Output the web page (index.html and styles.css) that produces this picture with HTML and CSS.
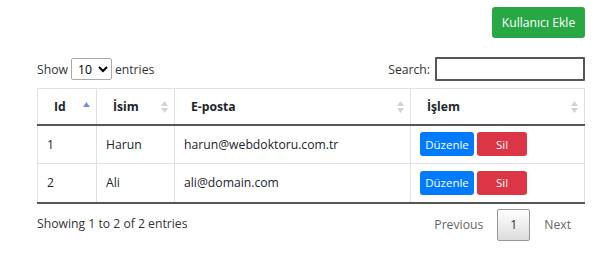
FILE: index.html
```html
<!DOCTYPE html>
<html lang="tr">
<head>
  <meta charset="UTF-8">
  <meta name="viewport" content="width=device-width, initial-scale=1.0">
  <title>Kullanıcılar</title>
  <link rel="stylesheet" href="styles.css">
</head>
<body>
  <div class="page">
    <div class="toolbar">
      <button class="btn btn--green">Kullanıcı Ekle</button>
    </div>
    <div class="controls">
      <label class="length">Show
        <select class="length__select">
          <option>10</option>
        </select>
        entries</label>
      <label class="search">Search: <input class="search__input" type="search"></label>
    </div>
    <table class="users">
      <colgroup>
        <col style="width: 59px">
        <col style="width: 78px">
        <col style="width: 236px">
        <col>
      </colgroup>
      <thead>
        <tr>
          <th class="sort sort--asc">Id</th>
          <th class="sort">İsim</th>
          <th class="sort">E-posta</th>
          <th class="sort">İşlem</th>
        </tr>
      </thead>
      <tbody>
        <tr>
          <td>1</td>
          <td>Harun</td>
          <td>harun@webdoktoru.com.tr</td>
          <td><button class="btn btn--blue">Düzenle</button><button class="btn btn--red">Sil</button></td>
        </tr>
        <tr>
          <td>2</td>
          <td>Ali</td>
          <td>ali@domain.com</td>
          <td><button class="btn btn--blue">Düzenle</button><button class="btn btn--red">Sil</button></td>
        </tr>
      </tbody>
    </table>
    <div class="footer">
      <div class="info">Showing 1 to 2 of 2 entries</div>
      <div class="paging">
        <span class="paging__link">Previous</span>
        <span class="paging__link paging__link--current">1</span>
        <span class="paging__link">Next</span>
      </div>
    </div>
  </div>
</body>
</html>
```

FILE: styles.css
```css
* {
  box-sizing: border-box;
}

body {
  margin: 0;
  font-family: "Open Sans", "Noto Sans", sans-serif;
  font-size: 12.2px;
  color: #212529;
  background-color: #fff;
}

.page {
  width: 585px;
  padding-left: 37px;
}

.toolbar {
  display: flex;
  justify-content: flex-end;
  padding-top: 7px;
}

.btn {
  border: 0;
  border-radius: 3px;
  color: #fff;
  font-family: inherit;
  cursor: pointer;
  padding: 0;
}

.btn--green {
  width: 93px;
  height: 31px;
  font-size: 12.2px;
  background-color: #28a745;
}

.controls {
  display: flex;
  justify-content: space-between;
  align-items: center;
  margin-top: 19px;
  height: 24px;
}

.length {
  display: flex;
  align-items: center;
  gap: 3px;
  color: #333;
}

.length__select {
  width: 41px;
  height: 22px;
  font-family: inherit;
  font-size: 12.2px;
  padding: 0 2px;
  border: 1px solid #aaa;
  border-radius: 2px;
  background-color: #fff;
}

.search {
  display: flex;
  align-items: center;
  gap: 5px;
  color: #333;
}

.search__input {
  width: 150px;
  height: 24px;
  border: 2px solid #555;
  border-radius: 1px;
}

.users {
  width: 548px;
  margin-top: 7px;
  border-collapse: collapse;
  table-layout: fixed;
  border-bottom: 2px solid #555;
}

.users th,
.users td {
  border: 1px solid #dee2e6;
  text-align: left;
}

.users th {
  position: relative;
  height: 36px;
  padding: 0 18px 0 16px;
  font-weight: 700;
  border-bottom: 2px solid #555;
}

.users td {
  height: 39px;
  padding: 0 9px;
}

/* sort arrows: up on ::before, down on ::after */
.sort::before,
.sort::after {
  content: "";
  position: absolute;
  right: 6px;
  width: 7px;
  height: 5px;
  background-color: #d3d3d3;
}

.sort::before {
  top: 12px;
  clip-path: polygon(50% 0, 100% 100%, 0 100%);
}

.sort::after {
  top: 19px;
  clip-path: polygon(0 0, 100% 0, 50% 100%);
}

.sort--asc::before {
  top: 13px;
  background-color: #7592d6;
}

.sort--asc::after {
  display: none;
}

.btn--blue,
.btn--red {
  height: 24px;
  font-size: 11.5px;
  vertical-align: middle;
}

.btn--blue {
  width: 54px;
  background-color: #007bff;
}

.btn--red {
  width: 50px;
  margin-left: 3px;
  background-color: #dc3545;
}

.footer {
  display: flex;
  justify-content: space-between;
  align-items: center;
  margin-top: 5px;
}

.info {
  color: #333;
  padding-bottom: 3px;
}

.paging {
  display: flex;
  align-items: center;
  padding-right: 0;
}

.paging__link {
  display: flex;
  align-items: center;
  justify-content: center;
  height: 32px;
  padding: 0 14px;
  color: #666;
}

.paging__link--current {
  width: 33px;
  padding: 0;
  color: #333;
  border: 1px solid #979797;
  border-radius: 2px;
  background: linear-gradient(to bottom, #fff 0%, #dcdcdc 100%);
}
```
